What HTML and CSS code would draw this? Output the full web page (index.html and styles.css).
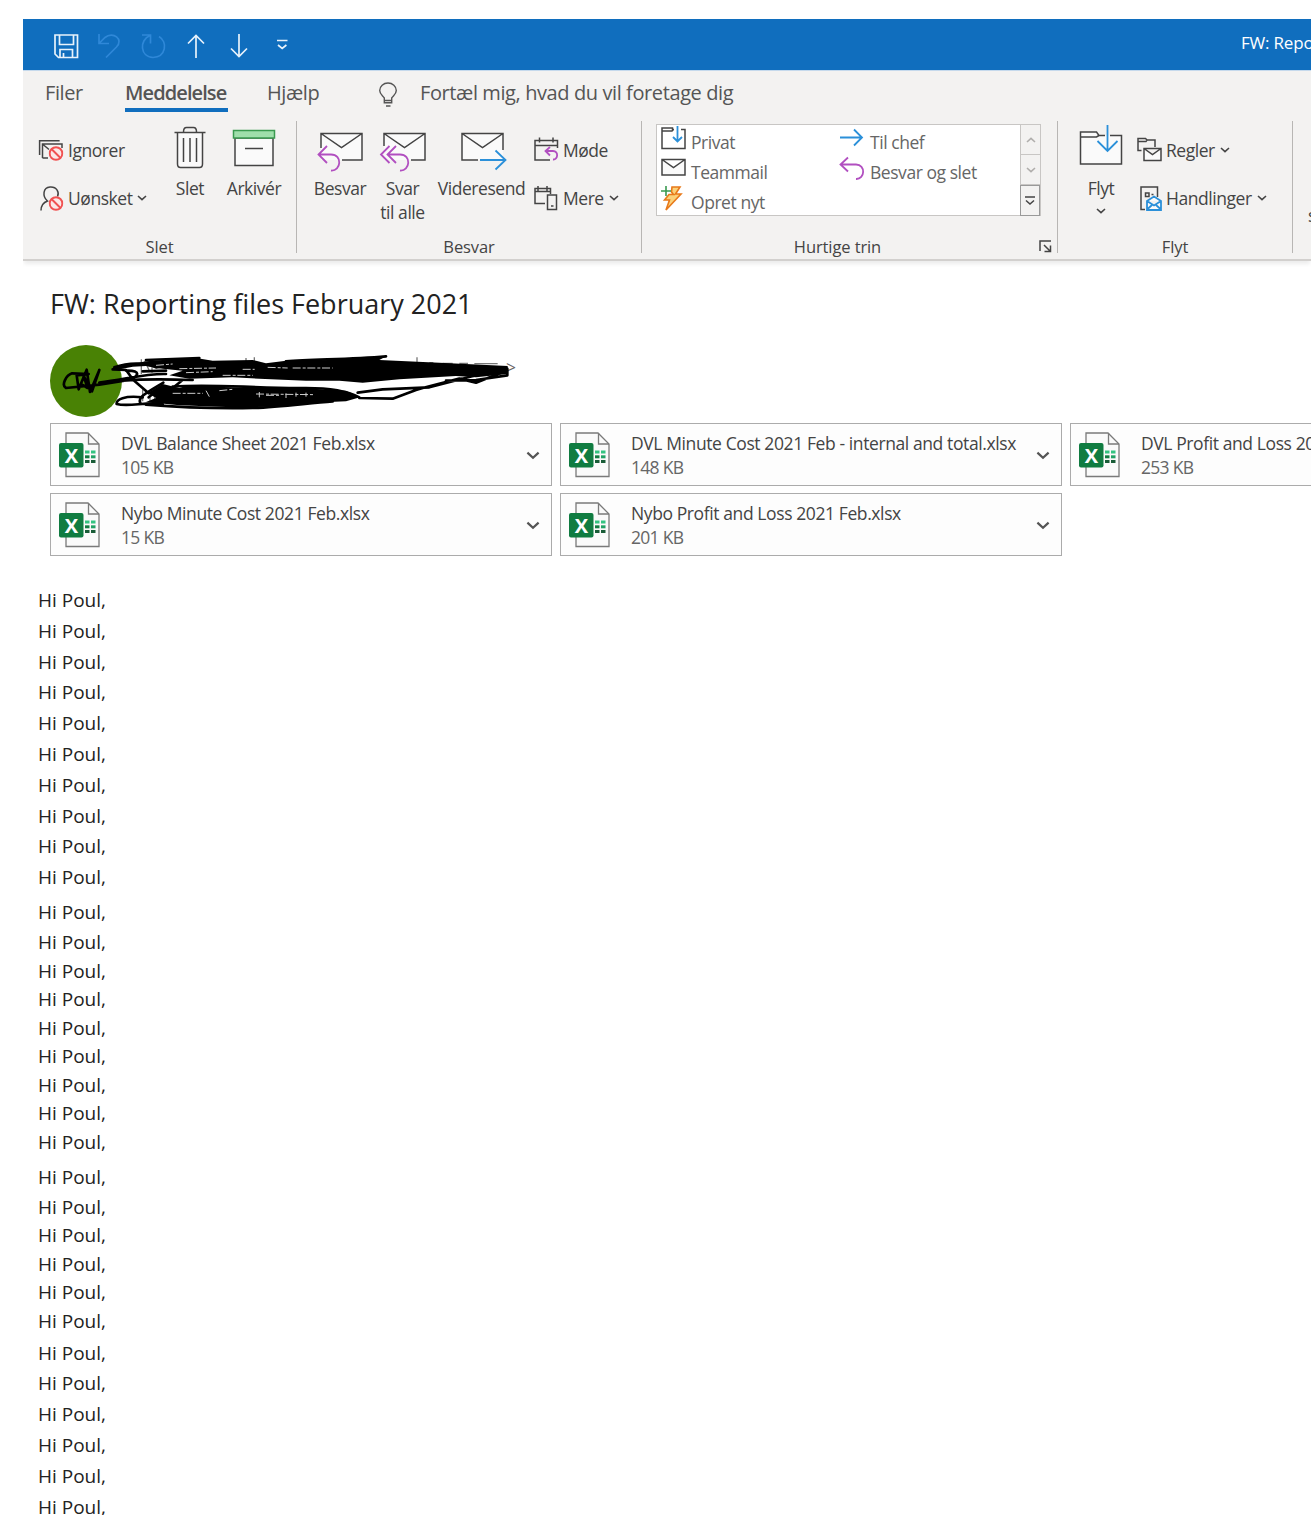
FILE: index.html
```html
<!DOCTYPE html>
<html lang="da">
<head>
    <meta charset="UTF-8">
    <meta name="viewport" content="width=device-width, initial-scale=1.0">
    <title>FW: Reporting files February 2021</title>
    <link rel="stylesheet" href="styles.css">
</head>
<body>
    <!-- Shared icons -->
    <svg class="defs" width="0" height="0">
        <symbol id="chevron" viewBox="0 0 10 6"><path d="M1 1l4 3.6L9 1" fill="none" stroke="currentColor" stroke-width="1.6"/></symbol>
        <symbol id="excel" viewBox="0 0 41 46">
            <path d="M7 1h22l11 11v32.500H7z" fill="#fafafa" stroke="#7a7a7a" stroke-width="1.300"/>
            <path d="M29.500 1v11H40" fill="none" stroke="#7a7a7a" stroke-width="1.300"/>
            <rect x="0" y="11" width="24.500" height="24.500" rx="2" fill="#107c41"/>
            <path d="M26 18.500h4.500v3H26zM32 18.500h4.500v3H32z" fill="#33c481"/>
            <path d="M26 23.300h4.500v3H26z" fill="#107c41"/>
            <path d="M32 23.300h4.500v3H32z" fill="#21a366"/>
            <path d="M26 28.100h4.500v3H26zM32 28.100h4.500v3H32z" fill="#185c37"/>
            <text x="12.200" y="30.500" text-anchor="middle" class="excel-x">X</text>
        </symbol>
        <symbol id="no" viewBox="0 0 14 14"><circle cx="7" cy="7" r="5.900" fill="#fbe9e8" stroke="#f05252" stroke-width="1.800"/><path d="M3 3l8 8" stroke="#f05252" stroke-width="1.800"/></symbol>
    </svg>

    <div class="window">
        <div class="titlebar">
            <div class="quick-access">
                <svg viewBox="0 0 24 24"><path d="M1 1h22.500v22.500H4.500L1 20zM5.500 1v9.500h14V1M6 23v-7.500h12.500V23M9.500 23v-4" /></svg>
                <svg class="dim" viewBox="0 0 24 24"><path d="M2 0v9.500h10M2 9.500l6-6C16-3 27 5 19.500 13L9 23.500"/></svg>
                <svg class="dim" viewBox="0 0 24 24"><path d="M1 1h8.500v8.500M9 1.500C-2 6-1 23 12 23.500 25 23 27 8 18 2.500"/></svg>
                <svg viewBox="0 0 24 24"><path d="M12 24V1.500M4 9.500l8-8 8 8"/></svg>
                <svg viewBox="0 0 24 24"><path d="M12 0v22.500M4 14.500l8 8 8-8"/></svg>
                <svg viewBox="0 0 24 24"><path d="M7 6.500h10.500M8 11l4.200 3.500 4.200-3.500"/></svg>
            </div>
            <div class="window-title">FW: Reporting files February 2021</div>
        </div>

        <div class="tabs">
            <span class="tab tab-file">Filer</span>
            <span class="tab tab-message active">Meddelelse</span>
            <span class="tab tab-help">Hjælp</span>
            <svg class="bulb" width="20" height="26" viewBox="0 0 20 26"><path d="M6.300 18.500v-2.500C4.500 13.500 1.700 12 1.700 8.500a8.300 7.500 0 0 1 16.600 0c0 3.500-2.800 5-4.600 7.500v2.500zM6.300 18.500v2.300h7.400v-2.300M8 24h4.500"/></svg>
            <span class="tab tab-search">Fortæl mig, hvad du vil foretage dig</span>
        </div>

        <div class="ribbon">
            <div class="group group-delete">
                <div class="group-body">
                    <div class="small-buttons">
                        <div class="small-button">
                            <svg width="28" height="28" viewBox="0 0 28 28"><path class="ink" d="M1.600 19V4.700h20M4.500 22V8H24v4M4.500 22H10M5 8.500l6 5"/><use href="#no" x="10.500" y="10" width="15" height="15"/></svg>
                            <span>Ignorer</span>
                        </div>
                        <div class="small-button">
                            <svg width="28" height="28" viewBox="0 0 28 28"><path class="ink" d="M3 26.500c0-5 2.500-8 6.500-9.500C4 12 5 3.500 12 3c7-.5 9.500 5.500 7.500 9.500"/><use href="#no" x="10.500" y="12" width="15" height="15"/></svg>
                            <span>Uønsket</span>
                            <svg class="chev" width="10" height="6"><use href="#chevron"/></svg>
                        </div>
                    </div>
                    <div class="big-button btn-delete">
                        <svg width="32" height="46" viewBox="0 0 32 46"><path class="ink" d="M3.500 7v31c0 2 1 3.500 3 3.500h19c2 0 3-1.500 3-3.500V7" fill="#fafafa"/><path class="ink" d="M.500 6.500h31M9.500 6c0-3 1-4.500 3-4.500h7c2 0 3 1.500 3 4.500M9.500 12v24M16 12v24M22.500 12v24"/></svg>
                        <span>Slet</span>
                    </div>
                    <div class="big-button btn-archive">
                        <svg width="44" height="46" viewBox="0 0 44 46"><path class="ink" d="M3 12h38v27.500H3z" fill="#fafafa"/><path d="M1.500 4.500h41V12h-41z" fill="#9fdfab" stroke="#3a9a50" stroke-width="1.500"/><path class="ink" d="M13 22.500h18"/></svg>
                        <span>Arkivér</span>
                    </div>
                </div>
                <div class="group-label">Slet</div>
            </div>

            <div class="group group-reply">
                <div class="group-body">
                    <div class="big-button btn-reply">
                        <svg width="46" height="46" viewBox="0 0 46 46"><path d="M4 7.500h41V34H4z" fill="#fafafa"/><path class="ink" d="M4 22V7.500h41V34H25M4 7.500l20.500 14L45 7.500"/><path class="purple" d="M10 20l-8.500 8.500L10 37M2 28.500h12c12 0 10 17 0 16"/></svg>
                        <span>Besvar</span>
                    </div>
                    <div class="big-button btn-reply-all">
                        <svg width="46" height="46" viewBox="0 0 46 46"><path d="M4 7.500h41V34H4z" fill="#fafafa"/><path class="ink" d="M4 20V7.500h41V34H31M4 7.500l20.500 14L45 7.500"/><path class="purple" d="M9.500 20L1 28.500 9.500 37M16 20l-8.500 8.500L16 37M8 28.500h12c12 0 10 17 0 16"/></svg>
                        <span>Svar<br>til alle</span>
                    </div>
                    <div class="big-button btn-forward">
                        <svg width="46" height="46" viewBox="-2 0 46 46"><path d="M1 7.500h41V34H1z" fill="#fafafa"/><path class="ink" d="M17 34H1V7.500h41V24M1 7.500l20.500 14L42 7.500"/><path class="blue" d="M19 34h26M34.500 24.500L44.500 34l-10 9.500"/></svg>
                        <span>Videresend</span>
                    </div>
                    <div class="small-buttons">
                        <div class="small-button">
                            <svg width="28" height="28" viewBox="0 0 28 28"><path class="ink" d="M17 24H2V4.500h22.500V12M2 9.500h22.500M6.500 1.500v5M20 1.500v5"/><path class="purple" d="M17 11l-4.500 4 4.500 4.500M12.500 15H20c6 0 5 9 0 8.500"/></svg>
                            <span>Møde</span>
                        </div>
                        <div class="small-button">
                            <svg width="28" height="28" viewBox="0 0 28 28"><path class="ink" d="M12 19.500H2V4.500h15.500V10M2 7.500h15.500M5 2v5M14 2v5M14.500 11h9v14.500h-9zM18 22h2.500"/></svg>
                            <span>Mere</span>
                            <svg class="chev" width="10" height="6"><use href="#chevron"/></svg>
                        </div>
                    </div>
                </div>
                <div class="group-label">Besvar</div>
            </div>

            <div class="group group-steps">
                <div class="group-body">
                    <div class="gallery">
                        <div class="gallery-items">
                            <div class="step">
                                <svg width="25" height="26" viewBox="0 0 25 26"><path class="ink" d="M13 4.500h-1.500V3H1v20.500h23V4.500h-4M1 6h10l1.500-1.500"/><path class="blue" d="M16.500 1v15.500M12 12l4.500 4.500L21 12"/></svg>
                                <span>Privat</span>
                            </div>
                            <div class="step">
                                <svg width="25" height="26" viewBox="0 0 25 26"><path class="blue" d="M0 12.500h22M14 4.500l8 8-8 8"/></svg>
                                <span>Til chef</span>
                            </div>
                            <div class="step">
                                <svg width="25" height="26" viewBox="0 0 25 26"><path class="ink" d="M1 4.500h23v15.500H1zM1 4.500l11.500 8 11.500-8" fill="#fafafa"/></svg>
                                <span>Teammail</span>
                            </div>
                            <div class="step">
                                <svg width="25" height="26" viewBox="0 0 25 26"><path class="purple" d="M8 2.500L.500 9.500l7.500 7M1 9.500h15c10 0 9 15 0 14.500"/></svg>
                                <span>Besvar og slet</span>
                            </div>
                            <div class="step">
                                <svg width="25" height="26" viewBox="0 0 25 26"><path d="M11 2h8l-4.500 7H20L5 25l3.500-10H3.500L8 9.500h4.500L10.500 7z" fill="#fbd27a" stroke="#e8791a" stroke-width="1.600"/><path d="M0 6h10M5 1v10" stroke="#3a9a50" stroke-width="1.600"/></svg>
                                <span>Opret nyt</span>
                            </div>
                        </div>
                        <div class="gallery-scroll">
                            <div class="scroll-button disabled"><svg class="flip" width="10" height="6"><use href="#chevron"/></svg></div>
                            <div class="scroll-button disabled"><svg width="10" height="6"><use href="#chevron"/></svg></div>
                            <div class="scroll-button expand"><svg width="12" height="10" viewBox="0 0 12 10"><path class="ink" d="M1 1h10M2 4.500L6 8l4-3.500"/></svg></div>
                        </div>
                    </div>
                </div>
                <div class="group-label">Hurtige trin</div>
                <svg class="launcher" width="13" height="13" viewBox="0 0 13 13"><path class="ink" d="M1 11V1h11M5 5l6 6M11.500 5.500v6h-6"/></svg>
            </div>

            <div class="group group-move">
                <div class="group-body">
                    <div class="big-button btn-move">
                        <svg width="44" height="46" viewBox="0 0 44 46"><path class="ink" d="M26 9.500h-6L17.500 6H1.500v32h41V9.500H31M1.500 11h16l2.500-1.500" fill="#fafafa"/><path class="blue" d="M28.500-1v26M18.500 15l10 10 10-10"/></svg>
                        <span>Flyt</span>
                        <svg class="chev" width="10" height="6"><use href="#chevron"/></svg>
                    </div>
                    <div class="small-buttons">
                        <div class="small-button">
                            <svg width="28" height="28" viewBox="0 0 28 28"><path class="ink" d="M5.500 14.500H2V2.500h7.500L11 4h8v7M2 5.500h8L11 4"/><path class="ink" d="M8 12.500h17v12H8zM8 12.500l8.500 6 8.500-6" fill="#fafafa"/></svg>
                            <span>Regler</span>
                            <svg class="chev" width="10" height="6"><use href="#chevron"/></svg>
                        </div>
                        <div class="small-button">
                            <svg width="28" height="28" viewBox="0 0 28 28"><path class="ink" d="M9 25.500H5V3h16.500v10M9.500 9h3.500v3.500H9.500zM15.500 10.500h2"/><path class="blue" d="M11 17l7-4.500 7 4.500v9H11zM11 17l7 4.500 7-4.500M11 25.500l5-4.500M25 25.500l-5-4.500" fill="#fafafa"/></svg>
                            <span>Handlinger</span>
                            <svg class="chev" width="10" height="6"><use href="#chevron"/></svg>
                        </div>
                    </div>
                </div>
                <div class="group-label">Flyt</div>
            </div>

            <div class="group group-tags">
                <div class="group-body"><span class="cut-label">s</span></div>
            </div>
        </div>

        <div class="message-header">
            <h1>FW: Reporting files February 2021</h1>
            <div class="sender">
                <div class="avatar"></div>
                <div class="sender-end">&gt;</div>
                <!-- Marker strokes covering the sender and recipient -->
                <svg class="scribble" viewBox="0 0 1440 246">
                    <path class="under-text" d="M286 64v44M296 68l14 30M318 66v38M290 154v36M312 178v14M326 178v14M600 60v10M625 58v12M760 88h100M1113 58v14M1150 74h12M1190 76h30M1240 76h26M1285 77h70"/>
                    <path d="M205 88L300 70 400 62 450 60 500 68 620 66 660 76 720 68 850 66 1022 54 1000 66 1180 74 1385 84 1385 108 1290 118 1230 114 1060 124 950 134 880 128 780 128 640 122 560 118 430 122 370 112 410 98 350 92 300 84 260 86 210 96z"/>
                    <path d="M305 165L350 138 400 150 420 144 560 148 800 152 900 158 942 178 900 190 800 194 700 206 560 208 400 202 300 192 330 180z"/>
                    <path class="marker" d="M205 88C250 72 300 74 330 88L360 84M200 94L240 96 262 126 308 166M240 98C290 96 280 120 235 128L160 140 60 150C45 142 60 112 78 106L128 108 92 112M92 112L98 154 122 95 132 162 160 96 138 160 112 112 125 150 108 140M160 134C240 124 300 106 360 108M230 128C300 122 380 124 440 126M410 126L380 150 330 160 308 178M352 134C300 165 270 180 285 198M290 178C235 172 210 184 212 198 250 208 300 190 350 198M300 200C400 208 520 212 620 210 700 208 780 196 860 190M380 146C500 136 620 152 780 150 870 150 910 162 940 178M935 164L1010 154 1150 148 1290 112 1360 90 1384 92 1384 112 1290 126 1200 128M1370 102L1290 134 1240 122 1130 150 1110 156 1040 182 940 180M290 100L360 98M300 66L460 60M720 70C800 62 900 66 1020 55"/>
                    <path class="gap" d="M330 82l50-4M400 92l110-2M420 104l80-3M590 94h36M665 88l60 2M740 90h120M530 112h90M380 166h90M480 158l10 18M520 158l40-4M630 168l176 2M640 162v16M660 172h40M720 166v14M750 164v12M780 164v12"/>
                </svg>
            </div>
            <div class="attachments">
                <div class="attachment">
                    <svg class="file-icon"><use href="#excel"/></svg>
                    <div class="file"><div class="file-name">DVL Balance Sheet 2021 Feb.xlsx</div><div class="file-size">105 KB</div></div>
                    <svg class="file-chev"><use href="#chevron"/></svg>
                </div>
                <div class="attachment">
                    <svg class="file-icon"><use href="#excel"/></svg>
                    <div class="file"><div class="file-name">DVL Minute Cost 2021 Feb - internal and total.xlsx</div><div class="file-size">148 KB</div></div>
                    <svg class="file-chev"><use href="#chevron"/></svg>
                </div>
                <div class="attachment">
                    <svg class="file-icon"><use href="#excel"/></svg>
                    <div class="file"><div class="file-name">DVL Profit and Loss 2021 Feb.xlsx</div><div class="file-size">253 KB</div></div>
                    <svg class="file-chev"><use href="#chevron"/></svg>
                </div>
                <div class="attachment">
                    <svg class="file-icon"><use href="#excel"/></svg>
                    <div class="file"><div class="file-name">Nybo Minute Cost 2021 Feb.xlsx</div><div class="file-size">15 KB</div></div>
                    <svg class="file-chev"><use href="#chevron"/></svg>
                </div>
                <div class="attachment">
                    <svg class="file-icon"><use href="#excel"/></svg>
                    <div class="file"><div class="file-name">Nybo Profit and Loss 2021 Feb.xlsx</div><div class="file-size">201 KB</div></div>
                    <svg class="file-chev"><use href="#chevron"/></svg>
                </div>
            </div>
        </div>

        <div class="message-body">
            <div class="block loose">
                <p>Hi Poul,</p>
                <p>Hi Poul,</p>
                <p>Hi Poul,</p>
                <p>Hi Poul,</p>
                <p>Hi Poul,</p>
                <p>Hi Poul,</p>
                <p>Hi Poul,</p>
                <p>Hi Poul,</p>
                <p>Hi Poul,</p>
                <p>Hi Poul,</p>
            </div>
            <div class="block tight">
                <p>Hi Poul,</p>
                <p>Hi Poul,</p>
                <p>Hi Poul,</p>
                <p>Hi Poul,</p>
                <p>Hi Poul,</p>
                <p>Hi Poul,</p>
                <p>Hi Poul,</p>
                <p>Hi Poul,</p>
                <p>Hi Poul,</p>
            </div>
            <div class="block tight">
                <p>Hi Poul,</p>
                <p>Hi Poul,</p>
                <p>Hi Poul,</p>
                <p>Hi Poul,</p>
                <p>Hi Poul,</p>
                <p>Hi Poul,</p>
            </div>
            <div class="block loose last">
                <p>Hi Poul,</p>
                <p>Hi Poul,</p>
                <p>Hi Poul,</p>
                <p>Hi Poul,</p>
                <p>Hi Poul,</p>
                <p>Hi Poul,</p>
            </div>
        </div>
    </div>
</body>
</html>
```
FILE: styles.css
```css
* {
    box-sizing: border-box;
}
body {
    font-family: "Open Sans", "Noto Sans", sans-serif;
    margin: 0;
    height: 1515px;
    overflow: hidden;
    background-color: #fff;
    color: #444;
    font-size: 17.5px;
    letter-spacing: -0.45px;
}
svg {
    display: block;
    flex: none;
    overflow: visible;
}
.defs {
    position: absolute;
}
.window {
    margin: 19px 0 0 23px;
    height: 1496px;
    overflow: hidden;
    white-space: nowrap;
}
.titlebar {
    display: flex;
    justify-content: space-between;
    height: 52px;
    background-color: #106ebe;
    border-bottom: 1px solid #c5d9ec;
    color: #fff;
}
.quick-access {
    display: flex;
    gap: 19.3px;
    padding: 15px 0 0 31px;
}
.quick-access svg {
    width: 24px;
    height: 24px;
    fill: none;
    stroke: #e8f2fb;
    stroke-width: 1.7;
}
.quick-access .dim {
    stroke: #2f88d8;
}
.window-title {
    width: 70px;
    overflow: hidden;
    line-height: 48px;
    font-size: 17px;
    letter-spacing: -0.2px;
}

/* Ribbon tabs */
.tabs {
    display: flex;
    height: 50px;
    background-color: #f3f2f1;
    padding-left: 22px;
    color: #555;
    font-size: 20px;
    letter-spacing: -0.4px;
}
.tab {
    height: 41px;
    line-height: 43px;
}
.tab-file {
    width: 80px;
}
.tab-message {
    width: 103px;
    margin-right: 39px;
}
.tab-help {
    width: 112px;
}
.tab.active {
    font-weight: 600;
    border-bottom: 4px solid #106ebe;
    letter-spacing: -0.9px;
}
.bulb {
    margin: 11px 22px 0 -1px;
    fill: none;
    stroke: #555;
    stroke-width: 1.4;
}

/* Ribbon */
.ribbon {
    display: flex;
    height: 140px;
    background-color: #f3f2f1;
    border-bottom: 2px solid #d2d0ce;
    box-shadow: 0 4px 4px -1px rgba(0,0,0,0.08);
}
.group {
    position: relative;
    flex: none;
    height: 132px;
    border-right: 1px solid #b8b6b4;
}
.group-delete {
    width: 274px;
}
.group-reply {
    width: 345px;
}
.group-steps {
    width: 416px;
}
.group-move {
    width: 235px;
}
.group-tags {
    width: 18px;
    border-right: none;
    overflow: hidden;
}
.group-body {
    display: flex;
    height: 115px;
    padding-top: 5px;
}
.group-label {
    text-align: center;
    font-size: 16.5px;
    letter-spacing: -0.1px;
    line-height: 22px;
}
.group-steps .group-label {
    padding-right: 24px;
}
.ink {
    stroke: #444;
    stroke-width: 1.5;
}
.ink:not([fill]) {
    fill: none;
}
.blue {
    stroke: #2b90d9;
    stroke-width: 1.8;
}
.blue:not([fill]) {
    fill: none;
}
.purple {
    stroke: #b14fc0;
    stroke-width: 1.8;
    fill: none;
}
.small-button {
    display: flex;
    align-items: center;
    height: 48px;
    gap: 2px;
}
.small-button .chev {
    margin-left: 3px;
}
.big-button {
    display: flex;
    flex-direction: column;
    align-items: center;
    text-align: center;
    line-height: 24px;
    gap: 4px;
}
.group-delete .small-buttons {
    width: 136px;
    padding-left: 15px;
}
.btn-delete {
    width: 62px;
}
.btn-archive {
    width: 66px;
}
.btn-reply {
    width: 60px;
    margin-left: 13px;
}
.btn-reply-all {
    width: 65px;
}
.btn-forward {
    width: 93px;
}
.group-reply .small-buttons {
    padding-left: 5px;
}
.btn-move {
    width: 64px;
    margin-left: 11px;
}
.btn-move .chev {
    margin-top: 4px;
}
.group-move .small-buttons {
    padding-left: 3px;
}
.cut-label {
    margin: 77px 0 0 15px;
}

/* Quick steps gallery */
.gallery {
    display: flex;
    width: 385px;
    height: 92px;
    margin: -2px 0 0 14px;
    border: 1px solid #c8c6c4;
    background-color: #fff;
    color: #666;
}
.gallery-items {
    display: grid;
    grid-template-columns: 179px 180px;
    grid-auto-rows: 30px;
    flex: 1;
    padding-left: 4px;
}
.step {
    display: flex;
    gap: 5px;
}
.step span {
    line-height: 34px;
}
.gallery-scroll {
    width: 21px;
    background-color: #f3f2f1;
}
.scroll-button {
    display: flex;
    align-items: center;
    justify-content: center;
    height: 30px;
    border-left: 1px solid #c8c6c4;
    border-bottom: 1px solid #c8c6c4;
}
.scroll-button.disabled {
    color: #b0aeac;
}
.scroll-button.expand {
    height: 31px;
    border: 1px solid #999;
}
.flip {
    transform: scaleY(-1);
}
.launcher {
    position: absolute;
    right: 5px;
    bottom: 0;
}

/* Message header */
.message-header {
    padding: 23px 0 0 27px;
}
h1 {
    margin: 0 0 21px;
    font-size: 27px;
    font-weight: 400;
    line-height: 40px;
    color: #222;
    letter-spacing: 0;
}
.sender {
    position: relative;
    display: flex;
    height: 78px;
}
.avatar {
    width: 72px;
    height: 72px;
    border-radius: 50%;
    background-color: #498205;
}
.sender-end {
    margin-left: 384px;
    line-height: 44px;
    color: #666;
}
.scribble {
    position: absolute;
    left: -4px;
    top: -7px;
    width: 480px;
    height: 82px;
}
.marker {
    fill: none;
    stroke: #000;
    stroke-width: 8;
    stroke-linejoin: round;
    stroke-linecap: round;
}
.under-text {
    fill: none;
    stroke: #777;
    stroke-width: 4;
}
.gap {
    fill: none;
    stroke: #ccc;
    stroke-width: 3;
    stroke-dasharray: 24 6 9 5;
}
.attachments {
    display: grid;
    grid-template-columns: repeat(3, 502px);
    gap: 7px 8px;
}
.attachment {
    display: flex;
    height: 63px;
    padding: 8px 11px 0 8px;
    border: 1px solid #ababab;
    background-color: #fdfdfd;
}
.file-icon {
    width: 41px;
    height: 46px;
}
.excel-x {
    font: 700 20px "Open Sans", sans-serif;
    fill: #fff;
}
.file {
    flex: 1;
    margin-top: -1px;
    padding-left: 21px;
    line-height: 24px;
    letter-spacing: -0.4px;
}
.file-name {
    color: #444;
}
.file-size {
    color: #666;
    letter-spacing: -0.7px;
}
.file-chev {
    width: 14px;
    height: 9px;
    margin-top: 19px;
    color: #555;
}

/* Message text */
.message-body {
    padding: 30px 0 0 15px;
    color: #222;
    font-size: 19px;
    letter-spacing: 0;
}
.block {
    margin-bottom: 6.5px;
}
.block p {
    margin: 0;
    line-height: 28.5px;
}
.loose p {
    margin-bottom: 2.3px;
}
.loose p:last-child {
    margin-bottom: 3px;
}
.tight p:first-child {
    margin-bottom: 1.5px;
}
.last {
    margin-top: -3px;
}
```
